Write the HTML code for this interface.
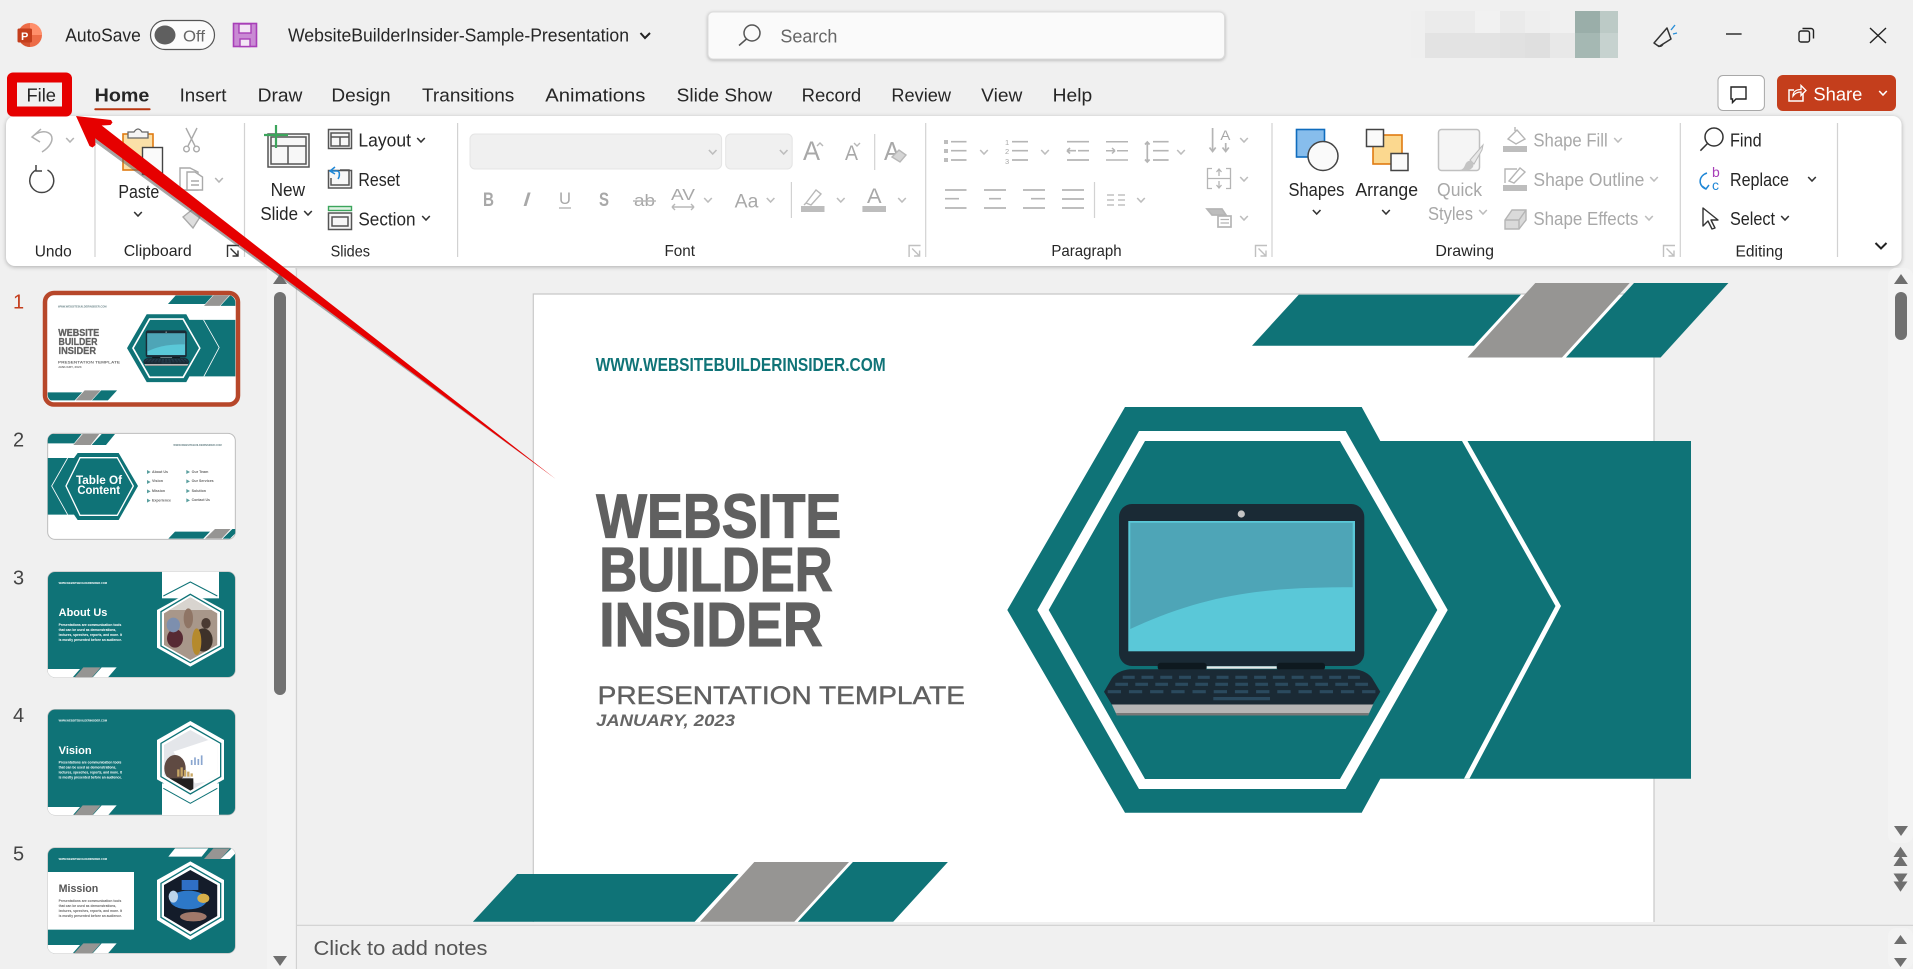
<!DOCTYPE html>
<html lang="en"><head><meta charset="utf-8"><title>PowerPoint</title>
<style>
html,body{margin:0;padding:0;background:#f0f0f0;overflow:hidden}
svg{display:block}
text{font-family:"Liberation Sans",sans-serif;font-size:18px;fill:#262626}
.g text,text.g{fill:#a8a8a8}
.b{font-weight:bold}
</style></head><body>
<svg xmlns="http://www.w3.org/2000/svg" width="1913" height="969" viewBox="0 0 1913 969">
<defs>
<path id="v" d="M-3.8-2L0 2 3.8-2" fill="none" stroke-width="1.6"/>
<path id="l" d="M.5 12V.5H12M3.5 3.5L11 11M11 5.5V11H5.5" fill="none" stroke-width="1.4"/>
<polygon id="dn" points="-7,-5 7,-5 0,5"/>
<polygon id="up" points="-7,5 7,5 0,-5"/>
<clipPath id="c1"><rect x="47.7" y="295.3" width="187.6" height="106.4" rx="7"/></clipPath>
<clipPath id="c2"><rect x="143" y="460" width="563" height="318" rx="22"/></clipPath>
<clipPath id="c3"><rect x="143" y="875" width="563" height="317" rx="22"/></clipPath>
<clipPath id="c4"><rect x="143" y="88" width="563" height="317" rx="22"/></clipPath>
<clipPath id="c5"><rect x="143" y="503" width="563" height="317" rx="22"/></clipPath>
<clipPath id="h3"><polygon points="571,952 652,1000 652,1095 571,1140 492,1095 492,1000"/></clipPath>
<clipPath id="h4"><polygon points="571,150 652,195 652,285 571,332 492,285 492,195"/></clipPath>
<clipPath id="h5"><polygon points="571,570 652,615 652,708 571,755 492,708 492,615"/></clipPath>
<g id="sh">
<polygon fill="#0f7377" points="1298.8,294.6 1521,294.6 1474,345.7 1252,345.7"/>
<polygon fill="#969593" points="1535.3,283 1629.7,283 1562,357.5 1467.5,357.5"/>
<polygon fill="#0f7377" points="1634,283 1728.4,283 1660.6,357.5 1566,357.5"/>
<polygon fill="#0f7377" points="1125,407 1361.7,407 1380.3,441 1691,441 1691,778.7 1380.3,778.7 1361.7,812.7 1125,812.7 1007.3,610"/>
<path fill="#fff" fill-rule="evenodd" d="M1139 431H1345.7L1447.7 610 1345.7 789H1139L1037.3 610ZM1145 441L1048.7 610 1145 779H1340L1437.3 610 1340 441Z"/>
<polygon fill="#fff" points="1462,441 1467.5,441 1561,606 1469.5,778.6 1464,778.6 1555.5,606"/>
<rect x="1119" y="504" width="245.3" height="162" rx="13" fill="#1a2a35"/>
<rect x="1128.3" y="521" width="226.7" height="130.3" fill="#5ac8d8"/>
<path fill="#4ea5b7" d="M1130.3 522.7H1352.7V587.3C1270 587.3 1210 592 1130.3 629Z"/>
<circle cx="1241.3" cy="514" r="3.6" fill="#c4c4c4"/>
<rect x="1157.7" y="662.7" width="49" height="7.5" rx="3" fill="#0e191f"/>
<rect x="1276.7" y="662.7" width="48.3" height="7.5" rx="3" fill="#0e191f"/>
<rect x="1206.7" y="666.3" width="70" height="2.4" fill="#e8e8e8"/>
<polygon fill="#b5b5b5" points="1111.7,704.3 1373.3,704.3 1368.3,715 1116.7,715"/>
<polygon fill="#777" points="1116,713 1369,713 1368.3,715.5 1116.7,715.5"/>
<path fill="#1a2a35" d="M1130 669.3H1354C1363 670 1369 674 1372 678L1380.3 691.7 1372.7 704.5H1111.7L1104 691.7 1112 678C1116 673 1122 670 1130 669.3Z"/>
<g fill="none" stroke="#2b4a5e" stroke-width="3.2">
<path d="M1122.7 677.3H1360" stroke-dasharray="12 6.77"/>
<path d="M1115.3 684.3H1368" stroke-dasharray="12.7 7.3"/>
<path d="M1107.7 691.7H1375.7" stroke-dasharray="13.3 7.9"/>
<path d="M1213.3 698.6H1270"/>
</g>
</g>
</defs>

<rect width="1913" height="969" fill="#f0f0f0"/>

<!-- title bar -->
<circle cx="30" cy="35" r="12" fill="#ed6c47"/>
<path d="M30 23A12 12 0 0 1 42 35H30Z" fill="#ff8f6b"/>
<path d="M30 47A12 12 0 0 1 18 35H30Z" fill="#d35230"/>
<rect x="17.5" y="28.5" width="14.5" height="14" rx="1.5" fill="#c43e1c"/>
<text x="21" y="40" class="b" style="font-size:11px;fill:#fff">P</text>
<text x="65.3" y="41.5" textLength="75.5" lengthAdjust="spacingAndGlyphs">AutoSave</text>
<rect x="150.5" y="20.5" width="64" height="29" rx="14.5" fill="#fbfbfb" stroke="#555" stroke-width="1.2"/>
<ellipse cx="165" cy="35" rx="10.5" ry="9.5" fill="#5f5f5f"/>
<text x="183" y="41.3" textLength="22" lengthAdjust="spacingAndGlyphs" style="font-size:15.5px;fill:#666">Off</text>
<rect x="233.5" y="23.5" width="23" height="23" fill="#c98ad4" stroke="#a83fb8" stroke-width="1.6"/>
<rect x="239" y="24" width="12" height="9" fill="#f3e6f5" stroke="#a83fb8" stroke-width="1.4"/>
<rect x="240" y="39" width="10" height="7.5" fill="#f3e6f5" stroke="#a83fb8" stroke-width="1.4"/>
<text x="288" y="41.5" textLength="341" lengthAdjust="spacingAndGlyphs">WebsiteBuilderInsider-Sample-Presentation</text>
<path d="M640.5 33L645 38 650 33" fill="none" stroke="#222" stroke-width="2"/>
<rect x="708" y="12" width="516.5" height="47" rx="5" fill="#fafafa" stroke="#dcdcdc" style="filter:drop-shadow(0 1px 1.5px rgba(0,0,0,.25))"/>
<circle cx="752" cy="33" r="8" fill="none" stroke="#555" stroke-width="1.5"/>
<path d="M746.5 39L739 45.5" stroke="#555" stroke-width="1.5"/>
<text x="780.4" y="42.5" textLength="57" lengthAdjust="spacingAndGlyphs" style="fill:#666">Search</text>

<!-- blurred account area -->
<g>
<rect x="1411" y="11" width="14" height="47" fill="#efefef"/>
<rect x="1425" y="11" width="50" height="22" fill="#ebebeb"/><rect x="1475" y="11" width="25" height="22" fill="#f1f1f1"/><rect x="1500" y="11" width="25" height="22" fill="#eaeaea"/><rect x="1525" y="11" width="25" height="22" fill="#eeeeee"/>
<rect x="1425" y="33" width="75" height="25" fill="#e3e3e3"/><rect x="1500" y="33" width="25" height="25" fill="#e1e1e1"/><rect x="1525" y="33" width="25" height="25" fill="#dfdfdf"/><rect x="1550" y="33" width="25" height="25" fill="#e8e8e8"/>
<rect x="1575" y="11" width="25" height="22" fill="#9aaea9"/><rect x="1600" y="11" width="18" height="22" fill="#bccac6"/>
<rect x="1575" y="33" width="25" height="25" fill="#a5b8b3"/><rect x="1600" y="33" width="18" height="25" fill="#c6d2cf"/>
</g>
<path d="M1667 28L1654 43 1659 46.5 1671 39Z" fill="none" stroke="#333" stroke-width="1.5" stroke-linejoin="round"/>
<path d="M1658 45.5a3 3 0 0 0 5-2" fill="none" stroke="#333" stroke-width="1.4"/>
<path d="M1671 30L1675 25M1673 34L1677 33" stroke="#2a8fd8" stroke-width="1.4"/>
<path d="M1726 34H1741.6" stroke="#222" stroke-width="1.4"/>
<rect x="1799" y="31" width="10.5" height="11" rx="2" fill="none" stroke="#222" stroke-width="1.4"/>
<path d="M1802.5 28.5H1811a2.5 2.5 0 0 1 2.5 2.5V38.5" fill="none" stroke="#222" stroke-width="1.4"/>
<path d="M1870 28L1886 43M1886 28L1870 43" stroke="#222" stroke-width="1.4"/>

<!-- tabs -->
<g>
<text x="26.5" y="101.3" textLength="29.5" lengthAdjust="spacingAndGlyphs">File</text>
<text x="94.7" y="101.3" textLength="54.7" lengthAdjust="spacingAndGlyphs" class="b">Home</text>
<text x="179.6" y="101.3" textLength="46.9" lengthAdjust="spacingAndGlyphs">Insert</text>
<text x="257.6" y="101.3" textLength="44.8" lengthAdjust="spacingAndGlyphs">Draw</text>
<text x="331.4" y="101.3" textLength="59.2" lengthAdjust="spacingAndGlyphs">Design</text>
<text x="422" y="101.3" textLength="92.3" lengthAdjust="spacingAndGlyphs">Transitions</text>
<text x="545.3" y="101.3" textLength="100.1" lengthAdjust="spacingAndGlyphs">Animations</text>
<text x="676.7" y="101.3" textLength="95.5" lengthAdjust="spacingAndGlyphs">Slide Show</text>
<text x="801.6" y="101.3" textLength="59.6" lengthAdjust="spacingAndGlyphs">Record</text>
<text x="891.4" y="101.3" textLength="59.6" lengthAdjust="spacingAndGlyphs">Review</text>
<text x="981.2" y="101.3" textLength="41.2" lengthAdjust="spacingAndGlyphs">View</text>
<text x="1052.7" y="101.3" textLength="39.5" lengthAdjust="spacingAndGlyphs">Help</text>
</g>
<rect x="94.3" y="108.3" width="56.3" height="2" rx="1" fill="#b7350f"/>
<rect x="1718" y="75.5" width="46.4" height="35" rx="5" fill="#fff" stroke="#a8a8a8"/>
<path d="M1731 87H1746V99H1736L1732.5 102.5V99H1731Z" fill="none" stroke="#222" stroke-width="1.4"/>
<rect x="1777" y="75" width="119" height="36" rx="6" fill="#c43e1c"/>
<path d="M1803 93V101H1789V90H1794" fill="none" stroke="#fff" stroke-width="1.5"/>
<path d="M1793 96C1793 91 1797 89.5 1801 89.5V85.5L1806 90.5 1801 95.5V92C1798 92 1795 93 1793 96Z" fill="none" stroke="#fff" stroke-width="1.3"/>
<text x="1813.4" y="100.5" textLength="49" lengthAdjust="spacingAndGlyphs" style="fill:#fff">Share</text>
<use href="#v" x="1883" y="93" stroke="#fff"/>

<!-- ribbon -->
<rect x="6" y="116" width="1895.6" height="150" rx="9" fill="#fff" style="filter:drop-shadow(0 1px 2px rgba(0,0,0,.28))"/>
<g stroke="#d2d2d2" stroke-width="1.2">
<path d="M95 123V257M244.5 123V257M457.6 123V257M925.7 123V257M1272 123V257M1680.3 123V257M1837.5 123V257"/>
<path d="M874.7 134V170M791.4 182V218M1094.5 182V218"/>
</g>

<!-- undo / redo -->
<path d="M41 129L32 137 40 142M32 137C38 131 47 130 51 135 54 140 50 147 42 152" fill="none" stroke="#b0b0b0" stroke-width="1.5"/>
<use href="#v" x="70" y="140" stroke="#b5b5b5"/>
<path d="M36 170A12 12 0 1 0 47.5 170" fill="none" stroke="#444" stroke-width="1.5"/>
<path d="M36 165V171H42" fill="none" stroke="#444" stroke-width="1.5"/>
<text x="34.7" y="256.7" textLength="37" lengthAdjust="spacingAndGlyphs" style="font-size:16px">Undo</text>

<!-- clipboard -->
<rect x="123" y="134" width="30" height="36" fill="#fbe0a8" stroke="#e07b12" stroke-width="1.6"/>
<path d="M128 138V132H134Q138 126 142 132H148V138Z" fill="#f5f5f5" stroke="#666" stroke-width="1.3"/>
<rect x="142.5" y="147.5" width="20" height="27" fill="#fafafa" stroke="#444" stroke-width="1.4"/>
<text x="118.4" y="198" textLength="40.8" lengthAdjust="spacingAndGlyphs">Paste</text>
<use href="#v" x="138" y="214" stroke="#333"/>
<g fill="none" stroke="#aaa" stroke-width="1.4">
<path d="M186 128L195 146M197 128L188 146"/><circle cx="186.5" cy="149" r="2.8"/><circle cx="196.5" cy="149" r="2.8"/>
<path d="M180 168H190L198 172V190H180Z"/><path d="M187 172H195L202.5 177V190H187Z" fill="#fff"/><path d="M191 181H199M191 185H199"/>
<path d="M183 217L193 209 200 217 193 228Z" fill="#dedede"/>
</g>
<use href="#v" x="219" y="180" stroke="#b5b5b5"/>
<text x="123.7" y="256" textLength="68" lengthAdjust="spacingAndGlyphs" style="font-size:16px">Clipboard</text>
<use href="#l" x="227" y="245" stroke="#333"/>

<!-- slides -->
<g fill="none" stroke="#555" stroke-width="1.5">
<path d="M268 134H309V167H268Z" fill="#f7f7f7"/><path d="M271 137H306V164H271ZM271 146H306M288 146V164"/>
</g>
<path d="M264 135H288M276 125V148" stroke="#3ca55c" stroke-width="2.2"/>
<text x="270.6" y="196" textLength="34.4" lengthAdjust="spacingAndGlyphs">New</text>
<text x="260.4" y="220" textLength="37.6" lengthAdjust="spacingAndGlyphs">Slide</text>
<use href="#v" x="308" y="213" stroke="#333"/>
<g fill="#f7f7f7" stroke="#555" stroke-width="1.5">
<rect x="328.5" y="129.5" width="23" height="19"/><path d="M331 133H349V146H331ZM340 137V146M331 137H349" fill="none"/>
<rect x="328.5" y="170.5" width="23" height="17.5"/><path d="M340 170H349V185H331V178" fill="none"/>
<rect x="328.5" y="213" width="23" height="16.5"/><path d="M332 217H348V226H332Z" fill="none"/>
</g>
<path d="M335 174L330 171 335 167M330 171H337C340 171 340 176 338 179" fill="none" stroke="#1f87d6" stroke-width="1.5"/>
<rect x="328.5" y="206.5" width="23" height="4" fill="#dff1e3" stroke="#3ca55c" stroke-width="1.4"/>
<text x="358.4" y="146.7" textLength="52.6" lengthAdjust="spacingAndGlyphs">Layout</text><use href="#v" x="421" y="140" stroke="#333"/>
<text x="358.4" y="186" textLength="41.6" lengthAdjust="spacingAndGlyphs">Reset</text>
<text x="358.4" y="225.3" textLength="57.1" lengthAdjust="spacingAndGlyphs">Section</text><use href="#v" x="426" y="218" stroke="#333"/>
<text x="330.6" y="256.7" textLength="39.4" lengthAdjust="spacingAndGlyphs" style="font-size:16px">Slides</text>

<!-- font -->
<rect x="470" y="134" width="251.6" height="35" rx="5" fill="#f0f0f0" stroke="#e4e4e4"/>
<rect x="725.7" y="134" width="66.5" height="35" rx="5" fill="#f0f0f0" stroke="#e4e4e4"/>
<use href="#v" x="712.7" y="152" stroke="#bdbdbd"/><use href="#v" x="783.7" y="152" stroke="#bdbdbd"/>
<g class="g">
<text x="803" y="160" textLength="17" lengthAdjust="spacingAndGlyphs" style="font-size:27px">A</text>
<text x="845" y="160" textLength="13" lengthAdjust="spacingAndGlyphs" style="font-size:21px">A</text>
<text x="884" y="160" textLength="16" lengthAdjust="spacingAndGlyphs" style="font-size:26px">A</text>
<text x="483" y="206" textLength="11" lengthAdjust="spacingAndGlyphs" class="b" style="font-size:19px">B</text>
<text x="522.4" y="206" textLength="8.6" lengthAdjust="spacingAndGlyphs" style="font-size:19px;font-style:italic">I</text>
<text x="559" y="204" textLength="12" lengthAdjust="spacingAndGlyphs" style="font-size:17px">U</text>
<text x="599" y="206" textLength="10" lengthAdjust="spacingAndGlyphs" class="b" style="font-size:19px">S</text>
<text x="634" y="206" textLength="21" lengthAdjust="spacingAndGlyphs" style="font-size:17px">ab</text>
<text x="671" y="200" textLength="24" lengthAdjust="spacingAndGlyphs" style="font-size:16px">AV</text>
<text x="734.7" y="207.7" textLength="23.7" lengthAdjust="spacingAndGlyphs" style="font-size:19px">Aa</text>
<text x="867" y="203" textLength="14.6" lengthAdjust="spacingAndGlyphs" style="font-size:21px">A</text>
</g>
<g fill="none" stroke="#b8b8b8" stroke-width="1.4">
<path d="M817 146L820 143 823 146M854 143L857 146 860 143"/>
<path d="M892 157L899 150 906 155 900 162Z" fill="#d5d5d5"/>
<path d="M559 208H571M633 201H656"/>
<path d="M672 207H694M672 207L675 204M672 207L675 210M694 207L691 204M694 207L691 210"/>
<path d="M806 203L816 190 821 194 811 205ZM806 203L804 205"/>
</g>
<rect x="801" y="206" width="23.5" height="6" fill="#bdbdbd"/><rect x="862.4" y="206" width="23.6" height="6" fill="#bdbdbd"/>
<g stroke="#bdbdbd">
<use href="#v" x="708" y="200"/><use href="#v" x="770.6" y="200"/><use href="#v" x="840.8" y="200"/><use href="#v" x="902" y="200"/>
</g>
<text x="664.5" y="256" textLength="30.5" lengthAdjust="spacingAndGlyphs" style="font-size:16px">Font</text>
<use href="#l" x="908.6" y="245" stroke="#c0c0c0"/>

<!-- paragraph -->
<g fill="none" stroke="#b5b5b5" stroke-width="1.7">
<path d="M951 141.7H966.5M951 150.7H966.5M951 160H966.5"/>
<path d="M1012 141.7H1028M1012 150.7H1028M1012 160H1028"/>
<path d="M1067 141.7H1089M1078 150.7H1089M1067 160H1089M1067 150.7H1076M1067 150.7L1070 148M1067 150.7L1070 153.5"/>
<path d="M1106 141.7H1128M1117 150.7H1128M1106 160H1128M1106 150.7H1115M1115 150.7L1112 148M1115 150.7L1112 153.5" stroke-width="1.5"/>
<path d="M1153 141.7H1168.6M1153 150.7H1168.6M1153 160H1168.6M1147.3 142V162M1145 144.5L1147.3 142 1149.6 144.5M1145 159.5L1147.3 162 1149.6 159.5"/>
<path d="M945 190H966.5M945 198.7H959M945 208H966.5"/>
<path d="M984 190H1006M989 198.7H1001M984 208H1006"/>
<path d="M1023 190H1045M1031 198.7H1045M1023 208H1045"/>
<path d="M1062 190H1084M1062 199H1084M1062 208H1084"/>
<path d="M1107 195H1114M1118 195H1125M1107 200H1114M1118 200H1125M1107 205H1114M1118 205H1125" stroke-width="1.3"/>
<path d="M1212.6 128V151M1209.5 147.5L1212.6 151.5 1215.7 147.5M1225.7 143V151M1222.5 147.5L1225.7 151.5 1228.8 147.5"/>
<path d="M1212 168.5H1207.5V188.5H1212M1226 168.5H1230.5V188.5H1226M1208 178.5H1230M1219 169V176M1216.5 172L1219 169 1221.5 172M1219 181V188M1216.5 185L1219 188 1221.5 185" stroke-width="1.3"/>
<path d="M1207 209H1222L1226 215H1212Z" fill="#bdbdbd"/><rect x="1218" y="216" width="13" height="11" fill="#fff"/><path d="M1220.5 219.5H1229M1220.5 223H1229" stroke-width="1.2"/>
</g>
<g fill="#bdbdbd"><rect x="944" y="140" width="4" height="4"/><rect x="944" y="149" width="4" height="4"/><rect x="944" y="158" width="4" height="4"/></g>
<g class="g"><text x="1005" y="145" style="font-size:7.5px">1</text><text x="1005" y="154" style="font-size:7.5px">2</text><text x="1005" y="164" style="font-size:7.5px">3</text>
<text x="1220.4" y="140" textLength="10" lengthAdjust="spacingAndGlyphs" style="font-size:14px">A</text></g>
<g stroke="#bdbdbd">
<use href="#v" x="984" y="152"/><use href="#v" x="1045" y="152"/><use href="#v" x="1181" y="152"/><use href="#v" x="1244" y="140"/><use href="#v" x="1244" y="179"/><use href="#v" x="1244" y="218"/><use href="#v" x="1141" y="200"/>
</g>
<text x="1051.4" y="256" textLength="70.2" lengthAdjust="spacingAndGlyphs" style="font-size:16px">Paragraph</text>
<use href="#l" x="1255" y="245" stroke="#c0c0c0"/>

<!-- drawing -->
<rect x="1296.5" y="129.5" width="28" height="27.5" fill="#87bdec" stroke="#0f6cbd" stroke-width="1.6"/>
<ellipse cx="1323" cy="156" rx="15" ry="14.5" fill="#fafafa" stroke="#444" stroke-width="1.5"/>
<rect x="1373" y="135" width="29" height="29" fill="#fbd88f" stroke="#e07b12" stroke-width="1.6"/>
<rect x="1366.5" y="129.5" width="17" height="17" fill="#fafafa" stroke="#444" stroke-width="1.5"/>
<rect x="1391" y="153.5" width="17" height="17" fill="#fafafa" stroke="#444" stroke-width="1.5"/>
<text x="1288.5" y="196" textLength="55.9" lengthAdjust="spacingAndGlyphs">Shapes</text><use href="#v" x="1316.7" y="212" stroke="#333"/>
<text x="1355.4" y="196" textLength="62.6" lengthAdjust="spacingAndGlyphs">Arrange</text><use href="#v" x="1386" y="212" stroke="#333"/>
<rect x="1438.5" y="129.5" width="41" height="41" rx="3" fill="#f5f5f5" stroke="#c0c0c0" stroke-width="1.5"/>
<path d="M1483 145L1470 160 1474 164 1482 150Z" fill="#e8e8e8" stroke="#bbb"/><path d="M1466 163C1470 158 1475 162 1473 167 1469 172 1463 171 1460 170 1464 169 1464 167 1466 163Z" fill="#c4c4c4"/>
<g class="g">
<text x="1437" y="196" textLength="45" lengthAdjust="spacingAndGlyphs">Quick</text>
<text x="1428" y="220" textLength="45" lengthAdjust="spacingAndGlyphs">Styles</text>
<text x="1533.4" y="146.7" textLength="74.3" lengthAdjust="spacingAndGlyphs">Shape Fill</text>
<text x="1533.4" y="186" textLength="111" lengthAdjust="spacingAndGlyphs">Shape Outline</text>
<text x="1533.4" y="225" textLength="104.9" lengthAdjust="spacingAndGlyphs">Shape Effects</text>
</g>
<g stroke="#bdbdbd"><use href="#v" x="1483" y="212"/><use href="#v" x="1618" y="140"/><use href="#v" x="1654" y="179"/><use href="#v" x="1649" y="218"/></g>
<rect x="1503" y="146" width="24" height="6" fill="#bdbdbd"/><rect x="1503" y="185" width="24" height="6" fill="#bdbdbd"/>
<g fill="none" stroke="#b5b5b5" stroke-width="1.4">
<path d="M1508 139L1517 130 1525 139 1516 144ZM1515 131V127"/>
<path d="M1505 183V169H1517M1509 181L1520 168 1525 172 1514 183Z"/>
<path d="M1505 220L1512 210H1526L1526 220 1519 229H1505Z" fill="#dadada"/><path d="M1505 220H1519L1526 210M1519 220V229"/>
</g>
<text x="1435.4" y="256" textLength="58.6" lengthAdjust="spacingAndGlyphs" style="font-size:16px">Drawing</text>
<use href="#l" x="1663" y="245" stroke="#c0c0c0"/>

<!-- editing -->
<circle cx="1714" cy="137" r="9" fill="none" stroke="#333" stroke-width="1.5"/><path d="M1707.5 143.5L1700.4 150.7" stroke="#333" stroke-width="1.5"/>
<text x="1730" y="146.7" textLength="31.6" lengthAdjust="spacingAndGlyphs">Find</text>
<text x="1712" y="177" style="font-size:14px;fill:#a83fb8">b</text>
<text x="1712" y="190" style="font-size:14px;fill:#1f87d6">c</text>
<path d="M1707 173C1698 176 1698 186 1706 189M1702 186L1706 189 1709 185" fill="none" stroke="#1f87d6" stroke-width="1.5"/>
<text x="1730" y="186" textLength="59" lengthAdjust="spacingAndGlyphs">Replace</text><use href="#v" x="1812" y="179" stroke="#333"/>
<path d="M1703 208V226L1708 221 1712 229 1715 228 1711 220 1718 220Z" fill="#fff" stroke="#333" stroke-width="1.4" stroke-linejoin="round"/>
<text x="1730" y="225" textLength="45" lengthAdjust="spacingAndGlyphs">Select</text><use href="#v" x="1785" y="218" stroke="#333"/>
<text x="1735.5" y="256.7" textLength="47.5" lengthAdjust="spacingAndGlyphs" style="font-size:16px">Editing</text>
<path d="M1875.5 243L1881 248.5 1886.5 243" fill="none" stroke="#222" stroke-width="2"/>

<!-- slide panel scrollbar -->
<rect x="267" y="268" width="28" height="701" fill="#f3f3f3"/>
<path d="M296.5 268V969" stroke="#d2d2d2" stroke-width="1.2"/>
<rect x="274" y="292" width="12" height="403" rx="6" fill="#717171"/>
<use href="#up" x="280" y="279" fill="#6f6f6f"/>
<use href="#dn" x="280" y="961" fill="#6f6f6f"/>

<!-- thumbnails numbers -->
<text x="13" y="308.7" style="font-size:20px;fill:#c43e1c">1</text>
<text x="13" y="446.7" style="font-size:20px;fill:#444">2</text>
<text x="13" y="584.7" style="font-size:20px;fill:#444">3</text>
<text x="13" y="722" style="font-size:20px;fill:#444">4</text>
<text x="13" y="860.7" style="font-size:20px;fill:#444">5</text>

<!-- thumb 1 -->
<rect x="45" y="293" width="193" height="111.5" rx="9" fill="#fff" stroke="#b7472a" stroke-width="4.5"/>
<g clip-path="url(#c1)">
<rect x="47.7" y="295.3" width="187.6" height="106.4" fill="#fff"/>
<g transform="translate(-41.52,246.11) scale(.1673)"><use href="#sh"/>
<polygon fill="#0f7377" points="517,874 738.6,874 694.6,922 472.9,922"/><polygon fill="#969593" points="754.3,862 849,862 794.3,922 700,922"/><polygon fill="#0f7377" points="852.9,862 947.9,862 893.2,922 797.9,922"/></g>
</g>
<text x="58" y="307.7" textLength="48.5" lengthAdjust="spacingAndGlyphs" class="b" style="font-size:3px;fill:#6a8488">WWW.WEBSITEBUILDERINSIDER.COM</text>
<text x="58.3" y="336" textLength="41" lengthAdjust="spacingAndGlyphs" class="b" style="font-size:10.5px;fill:#606060;stroke:#606060;stroke-width:.3">WEBSITE</text>
<text x="58.5" y="345" textLength="39" lengthAdjust="spacingAndGlyphs" class="b" style="font-size:10.5px;fill:#606060;stroke:#606060;stroke-width:.3">BUILDER</text>
<text x="58.5" y="354" textLength="37.5" lengthAdjust="spacingAndGlyphs" class="b" style="font-size:10.5px;fill:#606060;stroke:#606060;stroke-width:.3">INSIDER</text>
<text x="58" y="363.3" textLength="62" lengthAdjust="spacingAndGlyphs" class="b" style="font-size:4px;fill:#707070">PRESENTATION TEMPLATE</text>
<text x="58" y="368" textLength="23.5" lengthAdjust="spacingAndGlyphs" class="b" style="font-size:3px;fill:#707070">JANUARY, 2023</text>

<!-- thumb 2 -->
<g transform="translate(0,280) scale(.33333)">
<rect x="143" y="460" width="563" height="318" rx="22" fill="#fff" stroke="#bdbdbd" stroke-width="3"/>
<g clip-path="url(#c2)">
<polygon fill="#0f7377" points="143,462 245,462 222,490 143,490"/><polygon fill="#969593" points="248,462 298,462 272,495 220,495"/><polygon fill="#0f7377" points="305,462 345,462 318,495 275,495"/>
<polygon fill="#0f7377" points="233,519 356,519 414,618 356,720 233,720 222,704 143,704 143,534 222,534"/>
<polygon fill="none" stroke="#fff" stroke-width="4" points="240,533 352,533 400,618 352,706 240,706 198,618"/>
<polyline fill="none" stroke="#fff" stroke-width="2.5" points="203,534 155,618 203,704"/>
<polygon fill="#0f7377" points="525,755 630,755 610,776 505,776"/><polygon fill="#969593" points="645,747 692,747 665,776 615,776"/><polygon fill="#0f7377" points="697,747 706,747 706,760 690,776 668,776"/>
</g>
<text x="228" y="612" textLength="138" lengthAdjust="spacingAndGlyphs" class="b" style="font-size:35px;fill:#fff">Table Of</text>
<text x="232" y="642" textLength="128" lengthAdjust="spacingAndGlyphs" class="b" style="font-size:35px;fill:#fff">Content</text>
<text x="520" y="498" textLength="145" lengthAdjust="spacingAndGlyphs" class="b" style="font-size:9px;fill:#6a8488">WWW.WEBSITEBUILDERINSIDER.COM</text>
<g>
<text x="456" y="579" class="b" style="font-size:11px;fill:#666" textLength="48" lengthAdjust="spacingAndGlyphs">About Us</text>
<text x="456" y="606" class="b" style="font-size:11px;fill:#666" textLength="33" lengthAdjust="spacingAndGlyphs">Vision</text>
<text x="456" y="636" class="b" style="font-size:11px;fill:#666" textLength="39" lengthAdjust="spacingAndGlyphs">Mission</text>
<text x="456" y="664" class="b" style="font-size:11px;fill:#666" textLength="57" lengthAdjust="spacingAndGlyphs">Experience</text>
<text x="575" y="579" class="b" style="font-size:11px;fill:#666" textLength="50" lengthAdjust="spacingAndGlyphs">Our Team</text>
<text x="575" y="606" class="b" style="font-size:11px;fill:#666" textLength="66" lengthAdjust="spacingAndGlyphs">Our Services</text>
<text x="575" y="636" class="b" style="font-size:11px;fill:#666" textLength="43" lengthAdjust="spacingAndGlyphs">Solution</text>
<text x="575" y="663" class="b" style="font-size:11px;fill:#666" textLength="55" lengthAdjust="spacingAndGlyphs">Contact Us</text>
</g>
<g fill="#5a9f9f"><path d="M441 570L452 576 441 582ZM441 600L452 606 441 612ZM441 628L452 634 441 640ZM441 656L452 662 441 668ZM559 570L570 576 559 582ZM559 598L570 604 559 610ZM559 627L570 633 559 639ZM559 655L570 661 559 667Z"/></g>
</g>

<!-- thumb 3 -->
<g transform="translate(0,280) scale(.33333)">
<rect x="143" y="875" width="563" height="317" rx="22" fill="#0f7377" stroke="#bdbdbd" stroke-width="2"/>
<g clip-path="url(#c3)">
<rect x="486" y="875" width="171" height="80" fill="#fff"/>
<polyline fill="none" stroke="#0f7377" stroke-width="3" points="490,948 571,906 652,948"/>
<polygon fill="#fff" points="571,935 672,990 672,1103 571,1160 471,1103 471,990"/>
<polygon fill="none" stroke="#0f7377" stroke-width="4" points="571,943 662,995 662,1098 571,1148 483,1098 483,995"/>
<polygon fill="#fff" points="143,1167 240,1167 218,1192 143,1192"/><polygon fill="#969593" points="250,1162 302,1162 276,1192 224,1192"/><polygon fill="#fff" points="305,1162 350,1162 324,1192 278,1192"/>
<g clip-path="url(#h3)">
<rect x="490" y="950" width="165" height="195" fill="#a8978a"/>
<rect x="490" y="950" width="165" height="40" fill="#d8d4cf"/>
<ellipse cx="525" cy="1075" rx="24" ry="28" fill="#572a33"/><ellipse cx="610" cy="1080" rx="28" ry="35" fill="#3e322a"/><ellipse cx="590" cy="1085" rx="14" ry="40" fill="#b58a2d"/>
<ellipse cx="520" cy="1035" rx="20" ry="22" fill="#7d8fae"/><ellipse cx="565" cy="1015" rx="14" ry="30" fill="#8f7565"/><ellipse cx="618" cy="1030" rx="14" ry="16" fill="#4a3a32"/>
</g>
</g>
<text x="176" y="1008" textLength="146" lengthAdjust="spacingAndGlyphs" class="b" style="font-size:32px;fill:#fff">About Us</text>
<text x="176" y="912" textLength="145" lengthAdjust="spacingAndGlyphs" class="b" style="font-size:9px;fill:#fff">WWW.WEBSITEBUILDERINSIDER.COM</text>
<text x="176" y="1038" textLength="188" lengthAdjust="spacingAndGlyphs" class="b" style="font-size:10px;fill:#fff">Presentations are communication tools</text>
<text x="176" y="1053" textLength="173" lengthAdjust="spacingAndGlyphs" class="b" style="font-size:10px;fill:#fff">that can be used as demonstrations,</text>
<text x="176" y="1068" textLength="190" lengthAdjust="spacingAndGlyphs" class="b" style="font-size:10px;fill:#fff">lectures, speeches, reports, and more. It</text>
<text x="176" y="1083" textLength="190" lengthAdjust="spacingAndGlyphs" class="b" style="font-size:10px;fill:#fff">is mostly presented before an audience.</text>
</g>

<!-- thumb 4 -->
<g transform="translate(0,680) scale(.33333)">
<rect x="143" y="88" width="563" height="317" rx="22" fill="#0f7377" stroke="#bdbdbd" stroke-width="2"/>
<g clip-path="url(#c4)">
<rect x="486" y="310" width="171" height="100" fill="#fff"/>
<polyline fill="none" stroke="#0f7377" stroke-width="3" points="490,325 571,370 652,325"/>
<polygon fill="#fff" points="571,123 672,180 672,298 571,355 471,298 471,180"/>
<polygon fill="none" stroke="#0f7377" stroke-width="4" points="571,138 662,190 662,290 571,342 483,290 483,190"/>
<polygon fill="#fff" points="143,381 240,381 218,406 143,406"/><polygon fill="#969593" points="248,376 302,376 276,406 222,406"/><polygon fill="#fff" points="305,376 350,376 324,406 278,406"/>
<g clip-path="url(#h4)">
<rect x="490" y="148" width="165" height="190" fill="#e4e6ea"/>
<polygon fill="#4a4a4a" points="490,180 530,150 490,150"/>
<polygon fill="#fff" points="520,215 655,170 655,300 585,310"/>
<ellipse cx="525" cy="265" rx="32" ry="40" fill="#5f4a42"/><rect x="490" y="295" width="90" height="45" fill="#22201f"/>
<path d="M535 290V268M545 290V262M555 290V270M565 290V275M575 290V280" stroke="#c8a765" stroke-width="7"/>
<path d="M575 255V240M585 255V232M595 255V237M605 255V226" stroke="#8aa6cf" stroke-width="5"/>
</g>
</g>
<text x="176" y="222" textLength="99" lengthAdjust="spacingAndGlyphs" class="b" style="font-size:32px;fill:#fff">Vision</text>
<text x="176" y="125" textLength="145" lengthAdjust="spacingAndGlyphs" class="b" style="font-size:9px;fill:#fff">WWW.WEBSITEBUILDERINSIDER.COM</text>
<text x="176" y="251" textLength="188" lengthAdjust="spacingAndGlyphs" class="b" style="font-size:10px;fill:#fff">Presentations are communication tools</text>
<text x="176" y="266" textLength="173" lengthAdjust="spacingAndGlyphs" class="b" style="font-size:10px;fill:#fff">that can be used as demonstrations,</text>
<text x="176" y="281" textLength="190" lengthAdjust="spacingAndGlyphs" class="b" style="font-size:10px;fill:#fff">lectures, speeches, reports, and more. It</text>
<text x="176" y="296" textLength="190" lengthAdjust="spacingAndGlyphs" class="b" style="font-size:10px;fill:#fff">is mostly presented before an audience.</text>
</g>

<!-- thumb 5 -->
<g transform="translate(0,680) scale(.33333)">
<rect x="143" y="503" width="563" height="317" rx="22" fill="#0f7377" stroke="#bdbdbd" stroke-width="2"/>
<g clip-path="url(#c5)">
<rect x="143" y="576" width="259" height="173" fill="#fff"/>
<polygon fill="#fff" points="525,505 625,505 605,530 505,530"/><polygon fill="#969593" points="640,505 690,505 662,537 612,537"/><polygon fill="#fff" points="695,505 706,505 706,520 690,537 662,537"/>
<polygon fill="#fff" points="143,795 240,795 218,820 143,820"/><polygon fill="#969593" points="250,790 302,790 276,820 222,820"/><polygon fill="#fff" points="305,790 350,790 324,820 278,820"/>
<polygon fill="#fff" points="571,544 672,600 672,720 571,780 471,720 471,600"/>
<polygon fill="none" stroke="#0f7377" stroke-width="4" points="571,558 662,610 662,712 571,766 483,712 483,610"/>
<g clip-path="url(#h5)">
<rect x="490" y="568" width="165" height="190" fill="#141c2a"/>
<ellipse cx="565" cy="660" rx="55" ry="28" fill="#2d78c8"/><ellipse cx="610" cy="655" rx="18" ry="14" fill="#d8b04a"/><ellipse cx="520" cy="650" rx="14" ry="18" fill="#bcd4ea"/>
<rect x="545" y="600" width="50" height="30" fill="#2f6fc6"/>
<ellipse cx="580" cy="710" rx="40" ry="14" fill="#a0786a"/>
</g>
</g>
<text x="176" y="636" textLength="119" lengthAdjust="spacingAndGlyphs" class="b" style="font-size:32px;fill:#555">Mission</text>
<text x="176" y="540" textLength="145" lengthAdjust="spacingAndGlyphs" class="b" style="font-size:9px;fill:#fff">WWW.WEBSITEBUILDERINSIDER.COM</text>
<text x="176" y="666" textLength="188" lengthAdjust="spacingAndGlyphs" class="b" style="font-size:10px;fill:#666">Presentations are communication tools</text>
<text x="176" y="681" textLength="173" lengthAdjust="spacingAndGlyphs" class="b" style="font-size:10px;fill:#666">that can be used as demonstrations,</text>
<text x="176" y="696" textLength="190" lengthAdjust="spacingAndGlyphs" class="b" style="font-size:10px;fill:#666">lectures, speeches, reports, and more. It</text>
<text x="176" y="711" textLength="190" lengthAdjust="spacingAndGlyphs" class="b" style="font-size:10px;fill:#666">is mostly presented before an audience.</text>
</g>

<!-- right scrollbar -->
<rect x="1888" y="268" width="25" height="575" rx="8" fill="#f3f3f3"/>
<use href="#up" x="1901" y="279" fill="#6f6f6f"/>
<rect x="1895" y="292" width="12" height="48" rx="6" fill="#717171"/>
<use href="#dn" x="1901" y="831" fill="#6f6f6f"/>
<g fill="#6f6f6f">
<polygon points="1893.5,857 1900.5,846.7 1907.5,857"/><polygon points="1893.5,866 1900.5,855.5 1907.5,866"/>
<polygon points="1893.5,873.5 1907.5,873.5 1900.5,884"/><polygon points="1893.5,881.5 1907.5,881.5 1900.5,891.7"/>
</g>

<!-- main slide -->
<rect x="533.3" y="294" width="1120.7" height="628" fill="#fff"/>
<path d="M533.3 922V294H1654V922" fill="none" stroke="#c8c8c8" stroke-width="1.2"/>
<use href="#sh"/>
<polygon fill="#0f7377" points="517.1,874 738.6,874 694.6,921.7 472.9,921.7"/>
<polygon fill="#969593" points="754.3,862 849,862 794.3,921.7 700,921.7"/>
<polygon fill="#0f7377" points="852.9,862 947.9,862 893.2,921.7 797.9,921.7"/>
<text x="595.7" y="371" textLength="290" lengthAdjust="spacingAndGlyphs" class="b" style="font-size:18px;fill:#0f7377">WWW.WEBSITEBUILDERINSIDER.COM</text>
<text x="596.3" y="537.3" textLength="245" lengthAdjust="spacingAndGlyphs" class="b" style="font-size:62px;fill:#606060;stroke:#606060;stroke-width:1.2">WEBSITE</text>
<text x="599.3" y="591" textLength="233.4" lengthAdjust="spacingAndGlyphs" class="b" style="font-size:62px;fill:#606060;stroke:#606060;stroke-width:1.2">BUILDER</text>
<text x="599.3" y="646" textLength="223.4" lengthAdjust="spacingAndGlyphs" class="b" style="font-size:62px;fill:#606060;stroke:#606060;stroke-width:1.2">INSIDER</text>
<text x="597.7" y="704" textLength="367.3" lengthAdjust="spacingAndGlyphs" style="font-size:25px;fill:#606060;stroke:#606060;stroke-width:.4">PRESENTATION TEMPLATE</text>
<text x="596" y="726" textLength="139" lengthAdjust="spacingAndGlyphs" class="b" style="font-size:17px;font-style:italic;fill:#666">JANUARY, 2023</text>

<!-- notes -->
<rect x="297" y="922" width="1616" height="47" fill="#f0f0f0"/>
<path d="M297 925.3H1913" stroke="#d0d0d0" stroke-width="1.2"/>
<text x="313.5" y="955" textLength="174" lengthAdjust="spacingAndGlyphs" style="font-size:20.5px;fill:#555">Click to add notes</text>
<rect x="1888" y="928" width="25" height="41" rx="8" fill="#f3f3f3"/>
<polygon points="1894,944 1907,944 1900.5,935" fill="#6f6f6f"/>
<polygon points="1894,958 1907,958 1900.5,967" fill="#6f6f6f"/>

<!-- file highlight -->
<rect x="12" y="77.5" width="55" height="34" rx="1" fill="none" stroke="#e60000" stroke-width="10" stroke-linejoin="round"/>

<!-- arrow -->
<polygon fill="#666" opacity=".6" points="95,138.3 555.7,479 93.5,140"/>
<polygon fill="#666" opacity=".6" points="93.5,140 555.7,479 94,141.5"/>
<polygon fill="#e60000" points="76,116 111,120 112.5,122.5 110.5,125 101.7,125.5 555.7,479 95,138.3 95.5,145 92.5,147.5 89.5,146"/>
</svg>
</body></html>
